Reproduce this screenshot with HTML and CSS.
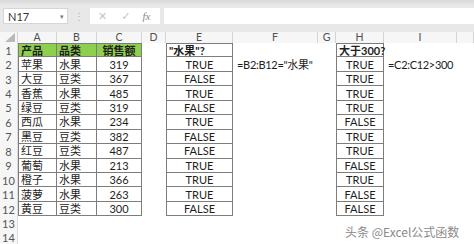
FILE: index.html
```html
<!DOCTYPE html>
<html lang="zh-CN">
<head>
<meta charset="utf-8">
<link rel="stylesheet" href="styles.css">
</head>
<body>
<div class="app">
  <div class="toolbar">
    <div class="namebox"><span class="nm">N17</span><span class="caret">▾</span></div>
    <div class="grip">⋮</div>
    <div class="fxbtns"><span class="ico">✕</span><span class="ico">✓</span><span class="fx">fx</span></div>
    <div class="formula"></div>
  </div>
  <div class="sheet">
    <div class="ch corner"><span class="tri"></span></div><div class="ch">A</div><div class="ch">B</div><div class="ch">C</div><div class="ch">D</div><div class="ch">E</div><div class="ch">F</div><div class="ch">G</div><div class="ch">H</div><div class="ch">I</div><div class="ch"></div>

    <div class="rh">1</div><div class="b bt bl g hb">产品</div><div class="b bt g hb">品类</div><div class="b bt g hb c">销售额</div><div></div><div class="b bt bl hb">"水果"?</div><div></div><div></div><div class="b bt bl hb">大于300?</div><div></div><div></div>

    <div class="rh">2</div><div class="b bl">苹果</div><div class="b">水果</div><div class="b c">319</div><div></div><div class="b bl c">TRUE</div><div class="ov">=B2:B12="水果"</div><div></div><div class="b bl c">TRUE</div><div class="ov">=C2:C12&gt;300</div><div></div>

    <div class="rh">3</div><div class="b bl">大豆</div><div class="b">豆类</div><div class="b c">367</div><div></div><div class="b bl c">FALSE</div><div></div><div></div><div class="b bl c">TRUE</div><div></div><div></div>

    <div class="rh">4</div><div class="b bl">香蕉</div><div class="b">水果</div><div class="b c">485</div><div></div><div class="b bl c">TRUE</div><div></div><div></div><div class="b bl c">TRUE</div><div></div><div></div>

    <div class="rh">5</div><div class="b bl">绿豆</div><div class="b">豆类</div><div class="b c">319</div><div></div><div class="b bl c">FALSE</div><div></div><div></div><div class="b bl c">TRUE</div><div></div><div></div>

    <div class="rh">6</div><div class="b bl">西瓜</div><div class="b">水果</div><div class="b c">234</div><div></div><div class="b bl c">TRUE</div><div></div><div></div><div class="b bl c">FALSE</div><div></div><div></div>

    <div class="rh">7</div><div class="b bl">黑豆</div><div class="b">豆类</div><div class="b c">382</div><div></div><div class="b bl c">FALSE</div><div></div><div></div><div class="b bl c">TRUE</div><div></div><div></div>

    <div class="rh">8</div><div class="b bl">红豆</div><div class="b">豆类</div><div class="b c">487</div><div></div><div class="b bl c">FALSE</div><div></div><div></div><div class="b bl c">TRUE</div><div></div><div></div>

    <div class="rh">9</div><div class="b bl">葡萄</div><div class="b">水果</div><div class="b c">213</div><div></div><div class="b bl c">TRUE</div><div></div><div></div><div class="b bl c">FALSE</div><div></div><div></div>

    <div class="rh">10</div><div class="b bl">橙子</div><div class="b">水果</div><div class="b c">366</div><div></div><div class="b bl c">TRUE</div><div></div><div></div><div class="b bl c">TRUE</div><div></div><div></div>

    <div class="rh">11</div><div class="b bl">菠萝</div><div class="b">水果</div><div class="b c">263</div><div></div><div class="b bl c">TRUE</div><div></div><div></div><div class="b bl c">FALSE</div><div></div><div></div>

    <div class="rh">12</div><div class="b bl">黄豆</div><div class="b">豆类</div><div class="b c">300</div><div></div><div class="b bl c">FALSE</div><div></div><div></div><div class="b bl c">FALSE</div><div></div><div></div>

    <div class="rh">13</div><div></div><div></div><div></div><div></div><div></div><div></div><div></div><div></div><div></div><div></div>

    <div class="rh">14</div><div></div><div></div><div></div><div></div><div></div><div></div><div></div><div></div><div></div><div></div>
  </div>
  <div class="watermark">头条 @Excel公式函数</div>
</div>
</body>
</html>
```

FILE: styles.css
```css
html, body {
  margin: 0;
  padding: 0;
  background: #ffffff;
}

.app {
  position: relative;
  width: 474px;
  height: 244px;
  overflow: hidden;
  font-family: "Lato", "Noto Sans CJK SC", sans-serif;
}

/* ---------- toolbar ---------- */
.toolbar {
  height: 32px;
  box-sizing: border-box;
  padding: 8px 0 8px 3px;
  display: flex;
  align-items: stretch;
  background: linear-gradient(#d9d9d9 0, #e4e4e4 4px, #e8e8e8 5px, #e8e8e8 100%);
}

.namebox {
  width: 65px;
  box-sizing: border-box;
  background: #ffffff;
  border: 1px solid #d6d6d6;
  display: flex;
  align-items: center;
  justify-content: space-between;
  padding: 0 3px 0 4px;
  font-size: 11px;
  color: #333;
}

.caret {
  font-size: 7px;
  color: #777;
}

.grip {
  width: 22px;
  display: flex;
  align-items: center;
  justify-content: center;
  color: #b0b0b0;
  font-size: 10px;
}

.fxbtns {
  width: 70px;
  background: #ffffff;
  display: flex;
  align-items: center;
  padding-left: 8px;
  box-sizing: border-box;
  gap: 14px;
}

.ico {
  color: #c4c4c4;
  font-size: 11px;
  font-family: "DejaVu Sans", sans-serif;
}

.fx {
  color: #8a8a8a;
  font-family: "Liberation Serif", serif;
  font-style: italic;
  font-size: 11px;
  margin-left: -2px;
}

.formula {
  flex: 1;
  margin-left: 4px;
  background: #ffffff;
}

/* ---------- sheet ---------- */
.sheet {
  display: grid;
  grid-template-columns: 18px 39px 40px 45px 24px 67px 85px 18px 48px 73px 17px;
  grid-template-rows: 11px repeat(14, 14.44px);
  font-size: 11px;
  color: #1e1e1e;
  line-height: 13px;
}

.sheet > div {
  box-sizing: border-box;
  white-space: nowrap;
  display: flex;
  align-items: center;
  padding: 0 0 0 2px;
  min-width: 0;
}

.ch {
  background: #f6f6f6;
  color: #505050;
  justify-content: center;
  font-size: 10.5px;
  border-right: 1px solid #d4d4d4;
  padding: 0 !important;
}

.corner {
  justify-content: flex-end !important;
  align-items: flex-end !important;
}

.tri {
  width: 0;
  height: 0;
  border-left: 10px solid transparent;
  border-bottom: 9px solid #b9b9b9;
  margin: 0 2px 1px 0;
}

.rh {
  background: #f6f6f6;
  color: #555;
  justify-content: center;
  padding: 0 !important;
  border-right: 1px solid #dcdcdc;
}

.b {
  border-right: 1px solid #7d7d7d;
  border-bottom: 1px solid #7d7d7d;
}

.bt {
  border-top: 1px solid #7d7d7d;
}

.bl {
  border-left: 1px solid #7d7d7d;
}

.g {
  background: #8fcf4e;
}

.hb {
  font-weight: 700;
}

.c {
  justify-content: center;
  padding: 0 !important;
}

.ov {
  overflow: visible;
  padding-left: 4px !important;
  letter-spacing: -0.3px;
}

/* ---------- watermark ---------- */
.watermark {
  position: absolute;
  left: 345px;
  top: 223px;
  font-family: "Noto Sans CJK SC", sans-serif;
  font-size: 12px;
  color: #8a8a8a;
  text-shadow: 0 0 2px #ffffff, 0 0 1px #ffffff;
}
```
